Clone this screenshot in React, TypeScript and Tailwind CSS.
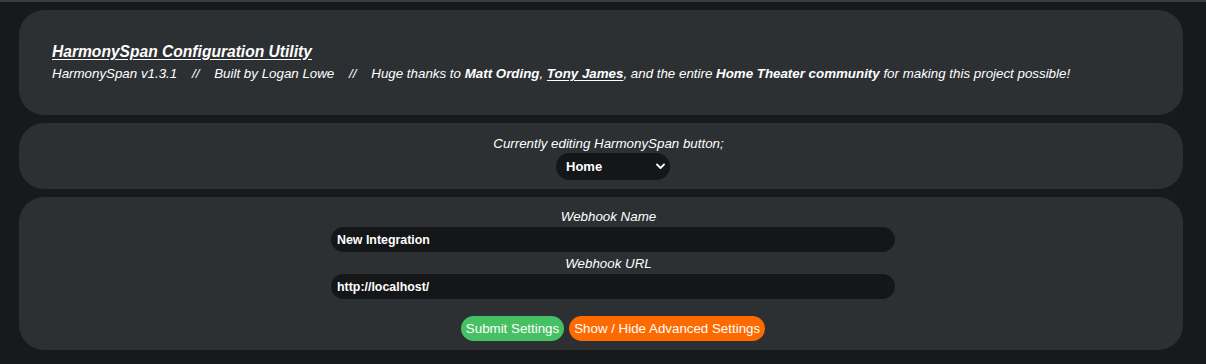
import React from "react";

export default function App() {
  return (
    <div
      className="w-[1206px] h-[364px] bg-[#18191b] border-t-2 border-[#3a3b3d] text-white overflow-hidden"
      style={{ fontFamily: '"Liberation Sans", Arial, sans-serif' }}
    >
      <div className="ml-[19px] w-[1164px] pt-[8px] flex flex-col gap-[8px]">
        {/* Header card */}
        <div className="bg-[#2d3033] rounded-[25px] h-[105px] pl-[33px] pt-[33px]">
          <div className="text-[15.6px] leading-[18px] font-bold italic underline underline-offset-[2px]">
            HarmonySpan Configuration Utility
          </div>
          <div className="text-[13.33px] leading-[15px] italic mt-[5px] whitespace-pre">
            {"HarmonySpan v1.3.1    //    Built by Logan Lowe    //    Huge thanks to "}
            <b>Matt Ording</b>
            {", "}
            <b className="underline underline-offset-[2px]">Tony James</b>
            {", and the entire "}
            <b>Home Theater community</b>
            {" for making this project possible!"}
          </div>
        </div>

        {/* Button select card */}
        <div className="bg-[#2d3033] rounded-[25px] h-[66px] pt-[13px] pl-[24px] flex flex-col items-center">
          <div className="text-[13.33px] leading-[16px] italic pr-[9px]">Currently editing HarmonySpan button;</div>
          <div className="relative mt-[1px]">
            <select
              defaultValue="Home"
              className="appearance-none w-[114px] h-[27px] rounded-full bg-[#151618] text-white text-[13px] font-bold pl-[10px] outline-none"
              style={{ fontFamily: '"Liberation Sans", Arial, sans-serif' }}
            >
              <option>Home</option>
            </select>
            <svg
              className="absolute right-[5px] top-[10px] pointer-events-none"
              width="9"
              height="7"
              viewBox="0 0 9 7"
            >
              <path d="M1 1.5 L4.5 5 L8 1.5" fill="none" stroke="white" strokeWidth="1.8" strokeLinecap="round" strokeLinejoin="round" />
            </svg>
          </div>
        </div>

        {/* Webhook card */}
        <div className="bg-[#2d3033] rounded-[25px] h-[153px] pt-[12px] pl-[24px] flex flex-col items-center">
          <div className="text-[13.33px] leading-[16px] italic pr-[9px]">Webhook Name</div>
          <input
            defaultValue="New Integration"
            className="mt-[2px] w-[564px] h-[25px] rounded-full bg-[#151618] text-white text-[12.4px] font-bold px-[6px] outline-none"
            style={{ fontFamily: '"Liberation Sans", Arial, sans-serif' }}
          />
          <div className="text-[13.33px] leading-[16px] italic mt-[4px] pr-[9px]">Webhook URL</div>
          <input
            defaultValue="http://localhost/"
            className="mt-[2px] w-[564px] h-[25px] rounded-full bg-[#151618] text-white text-[12.4px] font-bold px-[6px] outline-none"
            style={{ fontFamily: '"Liberation Sans", Arial, sans-serif' }}
          />
          <div className="flex gap-[5px] mt-[17px]">
            <button className="h-[25px] px-[5px] rounded-full bg-[#45c163] text-white text-[13.33px]">
              Submit Settings
            </button>
            <button className="h-[25px] px-[5px] rounded-full bg-[#ff6a00] text-white text-[13.33px]">
              Show / Hide Advanced Settings
            </button>
          </div>
        </div>
      </div>
    </div>
  );
}
